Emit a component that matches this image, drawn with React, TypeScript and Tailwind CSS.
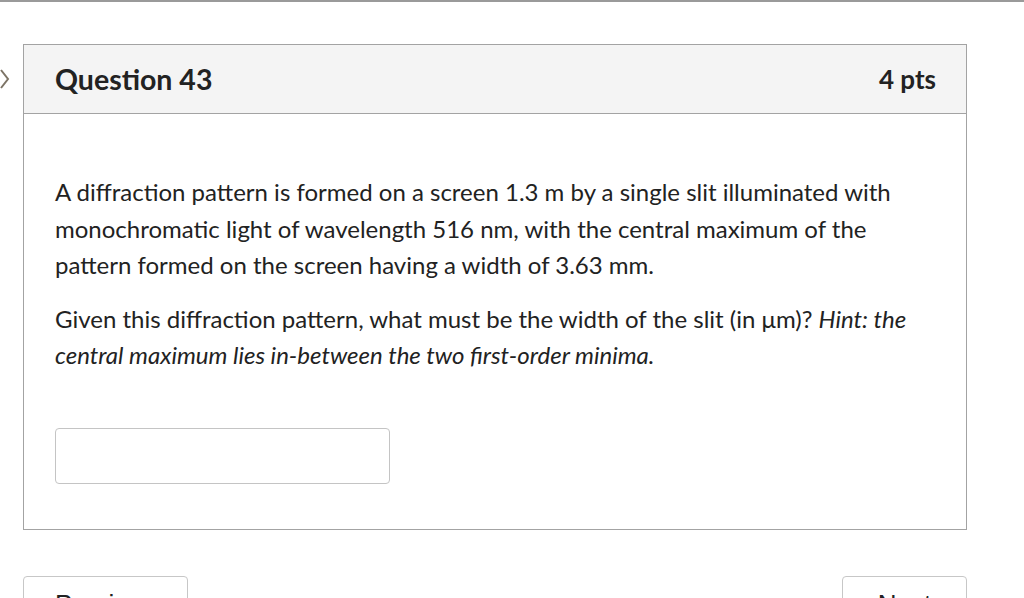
import React from 'react';

const App = () => {
  return (
    <div className="w-[1024px] h-[598px] overflow-hidden bg-white border-t-2 border-[#9a9a9a] text-[#222] font-['Lato','Liberation_Sans',sans-serif]">
      <div className="relative pt-[42px]">
        {/* collapse chevron on the left edge */}
        <svg className="absolute left-0 top-[66px]" width="10" height="22" viewBox="0 0 10 22">
          <path d="M1 2 L8 11 L1 20" fill="none" stroke="#7d7466" strokeWidth="2" />
        </svg>

        <div className="ml-[23px] w-[944px] border border-[#a3a3a3]">
          <div className="h-[69px] bg-[#f4f4f4] border-b border-[#a3a3a3] flex items-center justify-between pl-[31px] pr-[30px]">
            <h2 className="text-[28.5px] font-bold">Question 43</h2>
            <span className="text-[26px] font-bold">4 pts</span>
          </div>

          <div className="pl-[31px] pr-[20px] pt-[60px] pb-[45px] text-[24px] leading-[36.5px] whitespace-nowrap">
            <p>
              A diffraction pattern is formed on a screen 1.3 m by a single slit illuminated with
              <br />
              monochromatic light of wavelength 516 nm, with the central maximum of the
              <br />
              pattern formed on the screen having a width of 3.63 mm.
            </p>
            <p className="mt-[17px]">
              Given this diffraction pattern, what must be the width of the slit (in μm)?{' '}
              <em>Hint: the</em>
              <br />
              <em>central maximum lies in-between the two first-order minima.</em>
            </p>
            <input
              type="text"
              className="mt-[54px] block w-[335px] h-[56px] border border-[#c4c4c4] rounded-[4px] outline-none"
            />
          </div>
        </div>

        <div className="ml-[23px] w-[944px] mt-[46px] flex justify-between items-start">
          <button className="w-[165px] border border-[#c7c7c7] rounded-[4px] bg-white pt-[14px] pb-[14px] text-[26px] font-['Liberation_Sans',sans-serif] text-[#222] leading-none">
            Previous
          </button>
          <button className="w-[125px] border border-[#c7c7c7] rounded-[4px] bg-white pt-[14px] pb-[14px] text-[26px] font-['Liberation_Sans',sans-serif] text-[#222] leading-none">
            Next
          </button>
        </div>
      </div>
    </div>
  );
};

export default App;
